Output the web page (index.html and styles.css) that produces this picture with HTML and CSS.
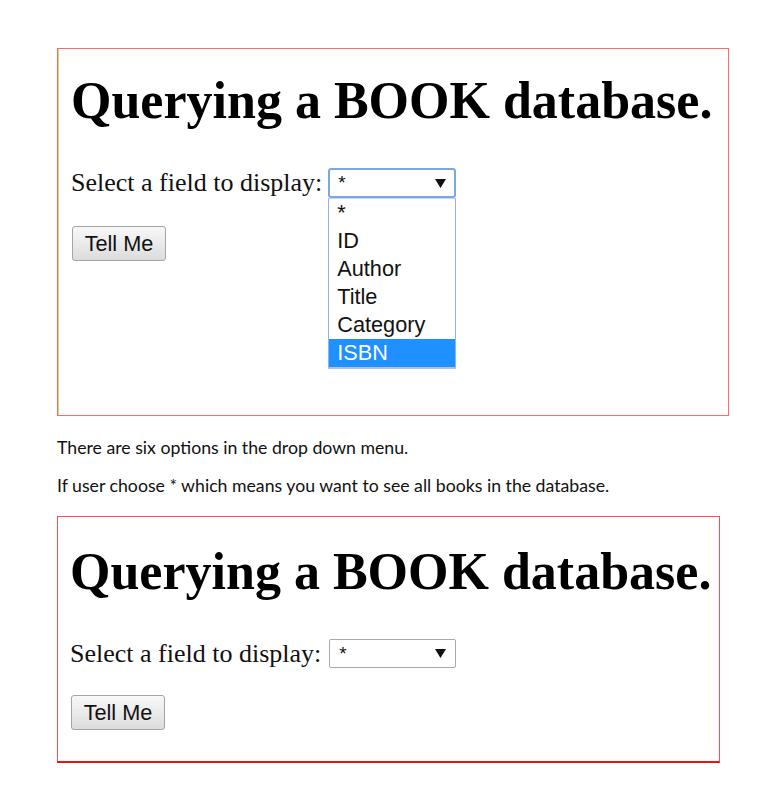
FILE: index.html
```html
<!DOCTYPE html>
<html lang="en">
<head>
<meta charset="utf-8">
<title>Querying a BOOK database</title>
<link rel="stylesheet" href="styles.css">
</head>
<body>
<div class="page">
  <section class="panel panel--open">
    <h1 class="title">Querying a BOOK database.</h1>
    <div class="field">
      <span class="field-label">Select a field to display:</span>
      <div class="select select--focus">
        <span class="select-value">*</span>
        <svg class="select-arrow" viewBox="0 0 11 9" width="11" height="9" aria-hidden="true"><polygon points="0,0 11,0 5.5,9" fill="#111"/></svg>
        <ul class="select-list">
          <li class="option">*</li>
          <li class="option">ID</li>
          <li class="option">Author</li>
          <li class="option">Title</li>
          <li class="option">Category</li>
          <li class="option option--active">ISBN</li>
        </ul>
      </div>
    </div>
    <button class="btn" type="button">Tell Me</button>
  </section>

  <p class="note note--first">There are six options in the drop down menu.</p>
  <p class="note">If user choose * which means you want to see all books in the database.</p>

  <section class="panel panel--closed">
    <h1 class="title">Querying a BOOK database.</h1>
    <div class="field">
      <span class="field-label">Select a field to display:</span>
      <div class="select select--idle">
        <span class="select-value">*</span>
        <svg class="select-arrow" viewBox="0 0 11 9" width="11" height="9" aria-hidden="true"><polygon points="0,0 11,0 5.5,9" fill="#111"/></svg>
      </div>
    </div>
    <button class="btn" type="button">Tell Me</button>
  </section>
</div>
</body>
</html>
```

FILE: styles.css
```css
html, body {
  margin: 0;
  padding: 0;
  background: #ffffff;
}

.page {
  padding: 48px 0 0 57px;
}

.panel {
  box-sizing: border-box;
  border: 1px solid #ff6a6a;
  padding: 0 13px;
}

.panel--open {
  width: 672px;
  padding-bottom: 154px;
  box-shadow: inset 1px 0 0 #c2dc6c;
}

.panel--closed {
  width: 663px;
  padding: 0 11px 31px 12px;
  border-color: #ff4c4c;
  border-bottom: 2px solid #ee1111;
}

.title {
  margin: 23px 0 0 0;
  font-family: "Liberation Serif", "Times New Roman", serif;
  font-weight: bold;
  font-size: 52px;
  line-height: 58px;
  color: #000;
  white-space: nowrap;
}

.panel--closed .title {
  margin-top: 26px;
}

.field {
  display: flex;
  align-items: center;
  gap: 6px;
  margin-top: 38px;
  height: 30px;
}

.panel--closed .field {
  gap: 8px;
  height: 29px;
}

.field-label {
  font-family: "Liberation Serif", "Times New Roman", serif;
  font-size: 26px;
  line-height: 30px;
  color: #111;
}

.select {
  position: relative;
  box-sizing: border-box;
  display: flex;
  align-items: center;
  justify-content: space-between;
  font-family: "Liberation Sans", Arial, sans-serif;
  font-size: 21.7px;
  color: #111;
  background: #fff;
}

.select--focus {
  width: 128px;
  height: 30px;
  border: 2px solid #7da6e6;
  border-radius: 3px;
  padding: 0 8px;
  line-height: 26px;
}

.select--idle {
  width: 127px;
  height: 29px;
  border: 1px solid #a9a9a9;
  border-radius: 2px;
  padding: 0 9px 0 9px;
  line-height: 27px;
}

.select-value {
  align-self: stretch;
  font-size: 19px;
}

.select-arrow {
  display: block;
  flex: none;
}

.select-list {
  position: absolute;
  top: calc(100% + 2px);
  left: -2px;
  width: 128px;
  box-sizing: border-box;
  margin: 0;
  padding: 0;
  list-style: none;
  border: 1px solid #93b3e6;
  border-top-color: #c9d8f2;
  border-bottom: 2px solid #a9c2ea;
  background: #fff;
}

.option {
  height: 28px;
  line-height: 28px;
  padding-left: 8px;
  color: #111;
}

.option--active {
  background: #1e90ff;
  color: #fff;
}

.btn {
  display: block;
  box-sizing: border-box;
  width: 94px;
  height: 35px;
  margin: 28px 0 0 1px;
  padding: 0;
  font-family: "Liberation Sans", Arial, sans-serif;
  font-size: 21.7px;
  color: #111;
  background: linear-gradient(#f8f8f8, #dcdcdc);
  border: 1px solid #a4a4a4;
  border-radius: 3px;
}

.panel--closed .btn {
  margin-top: 27px;
  margin-left: 1px;
}

.note {
  margin: 16px 0 0 0;
  font-family: Lato, "Open Sans", sans-serif;
  font-size: 17.7px;
  line-height: 22px;
  color: #111;
}

.note--first {
  margin-top: 21px;
}

.note + .panel {
  margin-top: 19px;
}
```
